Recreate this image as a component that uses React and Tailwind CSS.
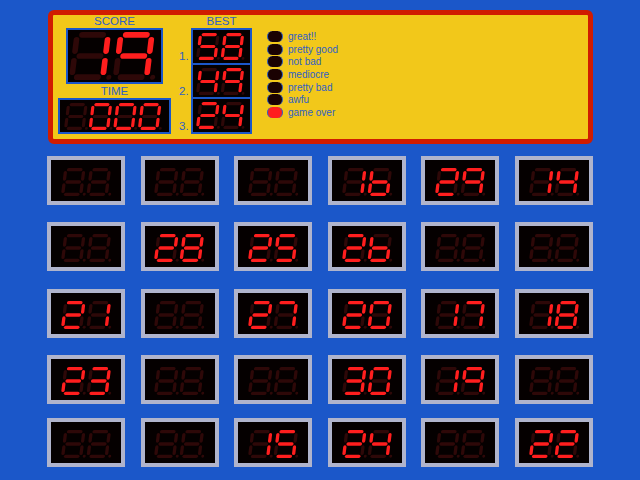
import React from 'react';

const SEG = {
  '0': 'abcdef',
  '1': 'bc',
  '2': 'abdeg',
  '3': 'abcdg',
  '4': 'bcfg',
  '5': 'acdfg',
  '6': 'cdefg',
  '7': 'abc',
  '8': 'abcdefg',
  '9': 'abcfg',
};

const W = 22;
const H = 30;
const T = 4;
const G = 3.5;
const ADV = 31;
const ON = '#ff1e1e';
const OFF = '#2e0808';

const LINES = {
  a: [G, 0, W - G, 0],
  b: [W, G, W, H / 2 - G],
  c: [W, H / 2 + G, W, H - G],
  d: [G, H, W - G, H],
  e: [0, H / 2 + G, 0, H - G],
  f: [0, G, 0, H / 2 - G],
  g: [G, H / 2, W - G, H / 2],
};

function Digit({ ch, x }) {
  const on = SEG[ch] || '';
  return (
    <g transform={`translate(${x} 0)`}>
      {Object.entries(LINES).map(([k, [x1, y1, x2, y2]]) => (
        <line
          key={k}
          x1={x1}
          y1={y1}
          x2={x2}
          y2={y2}
          stroke={on.includes(k) ? ON : OFF}
          strokeWidth={T}
          strokeLinecap="round"
        />
      ))}
      <circle cx={W + 4.2} cy={H} r={1.8} fill={OFF} />
    </g>
  );
}

function SevenSeg({ value, digits, height }) {
  const str = value.padStart(digits, ' ');
  const vbW = digits * ADV + 3;
  const vbH = 34;
  const width = (height * vbW) / vbH;
  return (
    <svg width={width} height={height} viewBox={`0 0 ${vbW} ${vbH}`}>
      <g transform={`translate(${T / 2 + 3.7} ${T / 2}) skewX(-7)`}>
        {str.split('').map((ch, i) => (
          <Digit key={i} ch={ch} x={i * ADV} />
        ))}
      </g>
    </svg>
  );
}

const legend = [
  { label: 'great!!', on: false },
  { label: 'pretty good', on: false },
  { label: 'not bad', on: false },
  { label: 'mediocre', on: false },
  { label: 'pretty bad', on: false },
  { label: 'awfu', on: false },
  { label: 'game over', on: true },
];

const rows = [
  { mt: 'mt-[12px]', cells: ['', '', '', '16', '29', '14'] },
  { mt: 'mt-[17px]', cells: ['', '28', '25', '26', '', ''] },
  { mt: 'mt-[18px]', cells: ['21', '', '27', '20', '17', '18'] },
  { mt: 'mt-[17px]', cells: ['23', '', '', '30', '19', ''] },
  { mt: 'mt-[14px]', cells: ['', '', '15', '24', '', '22'] },
];

const best = ['58', '49', '24'];

export default function App() {
  return (
    <div
      className="w-[640px] h-[480px] bg-[#1b57c9] overflow-hidden pt-[10px]"
      style={{ fontFamily: '"Liberation Sans", Arial, sans-serif' }}
    >
      {/* scoreboard */}
      <div className="ml-[48px] w-[545px] h-[134px] border-[5px] border-[#d01c00] rounded-[6px] bg-[#f2c81a] flex pl-[5px]">
        <div className="w-[113px] flex flex-col items-center">
          <div className="h-[13px] text-[11.5px] leading-[13px] text-[#2f5fc4]">SCORE</div>
          <div className="w-[97px] h-[56px] border-2 border-[#1b57c9] bg-[#050000] flex items-center justify-center">
            <SevenSeg value="19" digits={2} height={48} />
          </div>
          <div className="h-[14px] text-[11.5px] leading-[14px] text-[#2f5fc4]">TIME</div>
          <div className="w-[113px] h-[36px] border-2 border-[#1b57c9] bg-[#050000] flex items-center justify-center">
            <SevenSeg value="000" digits={4} height={27} />
          </div>
        </div>

        <div className="ml-[8px] w-[12px] pt-[13px] flex flex-col">
          {['1.', '2.', '3.'].map((r) => (
            <div key={r} className="h-[35px] flex items-end pb-[1px] text-[11.5px] leading-[12px] text-[#2f5fc4]">
              {r}
            </div>
          ))}
        </div>

        <div className="w-[61px] flex flex-col items-center">
          <div className="h-[13px] text-[11.5px] leading-[13px] text-[#2f5fc4]">BEST</div>
          <div className="w-[61px] h-[106px] border-2 border-[#1b57c9] bg-[#1b57c9] flex flex-col gap-[2px]">
            {best.map((b) => (
              <div key={b} className="flex-1 bg-[#050000] flex items-center justify-center">
                <SevenSeg value={b} digits={2} height={27} />
              </div>
            ))}
          </div>
        </div>

        <div className="ml-[15px] pt-[15px] flex flex-col">
          {legend.map((l) => (
            <div key={l.label} className="h-[12.7px] flex items-center gap-[5px]">
              <div
                className={
                  l.on
                    ? 'w-[16px] h-[11px] rounded-full bg-[#ff1e1e] border-x-[1.5px] border-[#2f5fc4]'
                    : 'w-[16px] h-[11px] rounded-full bg-[#1a0202] border-x-[1.5px] border-[#2f5fc4]'
                }
              />
              <span className="text-[10px] leading-[11px] text-[#2f5fc4]">{l.label}</span>
            </div>
          ))}
        </div>
      </div>

      {/* grid of displays */}
      <div className="ml-[47px] w-[546px] flex flex-col">
        {rows.map((row, ri) => (
          <div key={ri} className={`${row.mt} flex justify-between`}>
            {row.cells.map((v, ci) => (
              <div
                key={ci}
                className="w-[78px] h-[49px] border-4 border-[#b0b4cc] bg-[#050000] flex items-center justify-center pt-[3px] pl-[3px]"
              >
                <SevenSeg value={v} digits={2} height={28} />
              </div>
            ))}
          </div>
        ))}
      </div>
    </div>
  );
}
